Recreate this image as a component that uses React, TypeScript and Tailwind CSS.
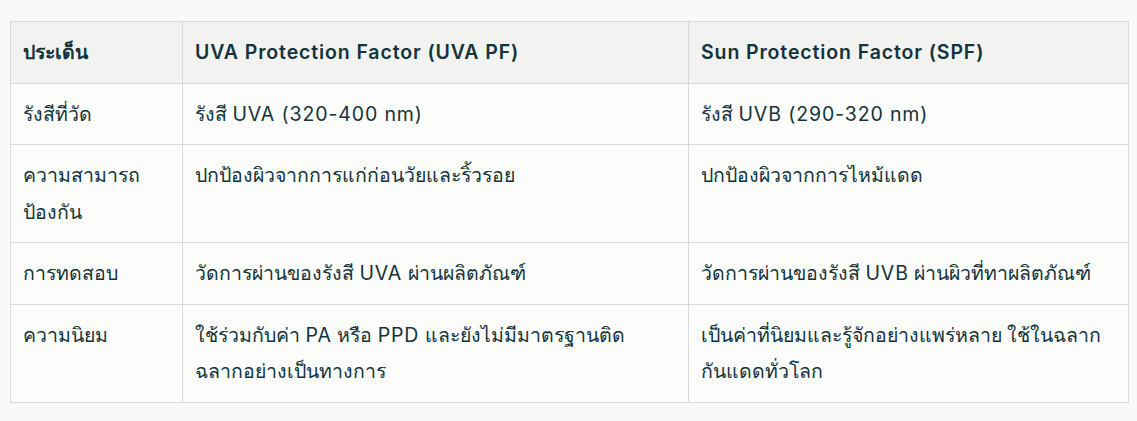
// Latin runs get a little extra tracking so Inter reads as wide as the original grotesk
function Txt({ s }: { s: string }) {
  const parts = s.split(/([A-Za-z0-9()\-]+(?:[ ]+[A-Za-z0-9()\-]+)*)/g);
  return (
    <>
      {parts.map((p, i) =>
        /[A-Za-z0-9]/.test(p) ? (
          <span key={i} className="tracking-[0.045em]">
            {p}
          </span>
        ) : (
          p
        ),
      )}
    </>
  );
}

// explicit line breaks (\n) become their own blocks
function Cell({ s }: { s: string }) {
  const lines = s.split('\n');
  if (lines.length === 1) return <Txt s={s} />;
  return (
    <>
      {lines.map((l, i) => (
        <div key={i}>
          <Txt s={l} />
        </div>
      ))}
    </>
  );
}

const rows: [string, string, string][] = [
  ['รังสีที่วัด', 'รังสี UVA (320-400 nm)', 'รังสี UVB (290-320 nm)'],
  ['ความสามารถ\nป้องกัน', 'ปกป้องผิวจากการแก่ก่อนวัยและริ้วรอย', 'ปกป้องผิวจากการไหม้แดด'],
  ['การทดสอบ', 'วัดการผ่านของรังสี UVA ผ่านผลิตภัณฑ์', 'วัดการผ่านของรังสี UVB ผ่านผิวที่ทาผลิตภัณฑ์'],
  [
    'ความนิยม',
    'ใช้ร่วมกับค่า PA หรือ PPD และยังไม่มีมาตรฐานติด\nฉลากอย่างเป็นทางการ',
    'เป็นค่าที่นิยมและรู้จักอย่างแพร่หลาย ใช้ในฉลาก\nกันแดดทั่วโลก',
  ],
];

export default function App() {
  return (
    <div
      className="min-h-[421px] w-full bg-[#f9f9f7] pl-[10px] pr-[9px] pt-[21px] text-[#13343b]"
      style={{ fontFamily: 'Inter, "Noto Sans", sans-serif' }}
    >
      <table className="w-[1118px] table-fixed border-collapse text-[19.5px] leading-[36.5px]">
        <colgroup>
          <col className="w-[172px]" />
          <col className="w-[506px]" />
          <col className="w-[440px]" />
        </colgroup>
        <thead>
          <tr className="bg-[#f2f2f0]">
            {['ประเด็น', 'UVA Protection Factor (UVA PF)', 'Sun Protection Factor (SPF)'].map((h) => (
              <th
                key={h}
                className="border border-[#d9d9d6] px-[12px] py-[12px] text-left align-top font-semibold"
              >
                <Txt s={h} />
              </th>
            ))}
          </tr>
        </thead>
        <tbody className="bg-[#fcfcfa]">
          {rows.map((r) => (
            <tr key={r[0]}>
              {r.map((c, i) => (
                <td key={i} className="border border-[#d9d9d6] px-[12px] py-[12px] align-top">
                  <Cell s={c} />
                </td>
              ))}
            </tr>
          ))}
        </tbody>
      </table>
    </div>
  );
}
